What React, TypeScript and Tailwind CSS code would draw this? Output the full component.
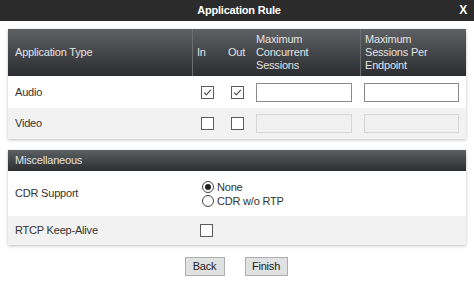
import React from 'react';

function Check({ checked }: { checked?: boolean }) {
  return (
    <span className="inline-flex w-[13px] h-[13px] border border-[#5c5c5c] bg-white items-center justify-center">
      {checked && (
        <svg width="11" height="11" viewBox="0 0 11 11">
          <path d="M2.2 5.6 L4.4 7.8 L8.8 2.8" fill="none" stroke="#3a3a3a" strokeWidth="1.1" />
        </svg>
      )}
    </span>
  );
}

function Radio({ checked }: { checked?: boolean }) {
  return (
    <span className="inline-flex w-[12px] h-[12px] rounded-full border border-[#444] bg-white items-center justify-center">
      {checked && <span className="w-[6px] h-[6px] rounded-full bg-[#222]" />}
    </span>
  );
}

const headerBg = 'bg-gradient-to-b from-[#5e6164] to-[#2b2d30] text-[#e2e2e2]';

export default function App() {
  return (
    <div
      className="w-[474px] h-[289px] bg-white text-[#333] text-[11px] leading-[13px] tracking-[-0.2px] overflow-hidden"
      style={{ fontFamily: '"Liberation Sans", Arial, sans-serif' }}
    >
      <div className="h-[21px] bg-[#2b2b2b] text-white font-bold flex items-center relative">
        <div className="flex-1 text-center pl-[4px]">Application Rule</div>
        <div className="absolute right-[7px] top-[4px] text-[12px]">X</div>
      </div>

      <div className="mt-[8px] mx-[8px] shadow-[0_1px_3px_rgba(0,0,0,0.25)]">
        <div className={`flex h-[47px] ${headerBg}`}>
          <div className="w-[184px] pl-[7px] flex items-center">Application Type</div>
          <div className="w-[30px] pl-[4px] flex items-center border-l border-[#6a6d70]">In</div>
          <div className="w-[30px] pl-[6px] flex items-center">Out</div>
          <div className="w-[108px] pl-[4px] flex items-center">
            Maximum<br />Concurrent<br />Sessions
          </div>
          <div className="flex-1 pl-[4px] flex items-center border-l border-[#6a6d70]">
            Maximum<br />Sessions Per<br />Endpoint
          </div>
        </div>
        <div className="flex h-[32px] items-center bg-white">
          <div className="w-[184px] pl-[7px]">Audio</div>
          <div className="w-[30px] flex justify-center"><Check checked /></div>
          <div className="w-[30px] flex justify-center"><Check checked /></div>
          <div className="w-[108px] pl-[4px]">
            <div className="w-[96px] h-[19px] border border-[#8a8a8a] bg-white" />
          </div>
          <div className="flex-1 pl-[4px]">
            <div className="w-[95px] h-[19px] border border-[#8a8a8a] bg-white" />
          </div>
        </div>
        <div className="flex h-[31px] items-center bg-[#f2f2f2]">
          <div className="w-[184px] pl-[7px]">Video</div>
          <div className="w-[30px] flex justify-center"><Check /></div>
          <div className="w-[30px] flex justify-center"><Check /></div>
          <div className="w-[108px] pl-[4px]">
            <div className="w-[96px] h-[19px] border border-[#d6d6d6] bg-[#f0f0f0]" />
          </div>
          <div className="flex-1 pl-[4px]">
            <div className="w-[95px] h-[19px] border border-[#d6d6d6] bg-[#f0f0f0]" />
          </div>
        </div>
      </div>

      <div className="mt-[11px] mx-[8px] shadow-[0_1px_3px_rgba(0,0,0,0.25)]">
        <div className={`h-[21px] flex items-center pl-[7px] ${headerBg}`}>Miscellaneous</div>
        <div className="flex h-[45px] items-center bg-white">
          <div className="w-[184px] pl-[7px]">CDR Support</div>
          <div className="pl-[10px] flex flex-col gap-[1px] pt-[1px]">
            <label className="flex items-center gap-[3px]"><Radio checked /><span>None</span></label>
            <label className="flex items-center gap-[3px]"><Radio /><span>CDR w/o RTP</span></label>
          </div>
        </div>
        <div className="flex h-[29px] items-center bg-[#f2f2f2]">
          <div className="w-[184px] pl-[7px]">RTCP Keep-Alive</div>
          <div className="pl-[8px] flex"><Check /></div>
        </div>
      </div>

      <div className="flex justify-center gap-[20px] mt-[12px] pr-[2px]">
        <button className="w-[40px] h-[19px] bg-[#e1e1e1] border border-[#adadad] text-[#222] text-[11px]">Back</button>
        <button className="w-[43px] h-[19px] bg-[#e1e1e1] border border-[#adadad] text-[#222] text-[11px]">Finish</button>
      </div>
    </div>
  );
}
